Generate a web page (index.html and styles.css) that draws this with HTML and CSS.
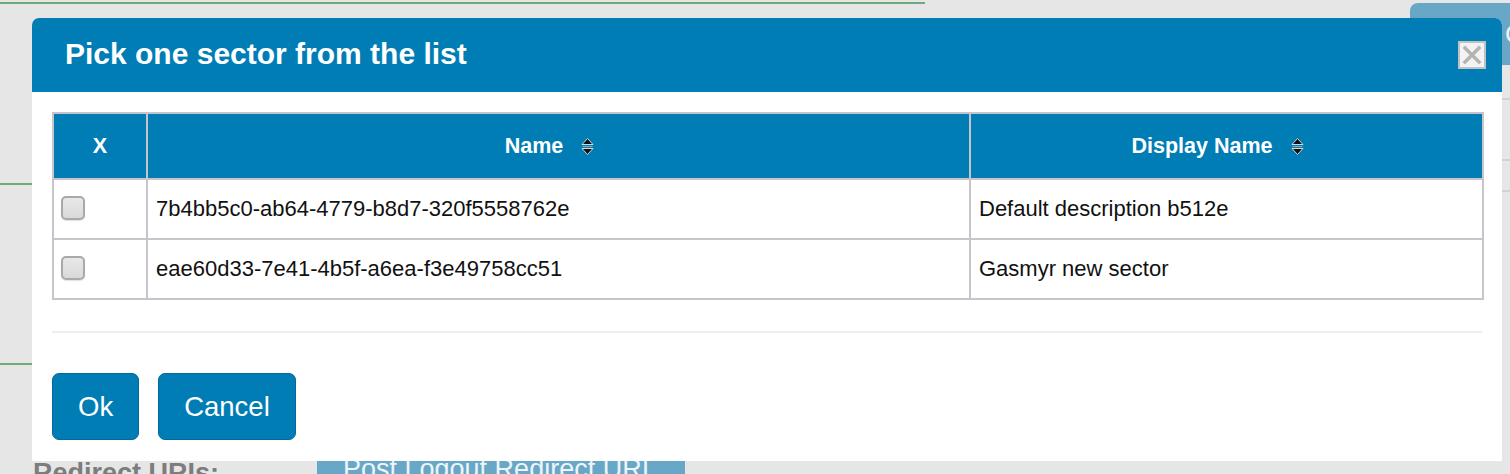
FILE: index.html
```html
<!DOCTYPE html>
<html lang="en">
<head>
<meta charset="utf-8">
<title>Pick one sector</title>
<link rel="stylesheet" href="styles.css">
</head>
<body>
<div class="page">
  <div class="page-main">
    <div class="gline gline-top"></div>
    <div class="gline gline-a"></div>
    <div class="gline gline-b"></div>
    <div class="bottom-row">
      <span class="bg-label">Redirect URIs:</span>
      <span class="bg-btn">Post Logout Redirect URI</span>
    </div>
  </div>
  <div class="page-side">
    <div class="side-btn">Cl</div>
    <div class="side-line side-line-a"></div>
    <div class="side-line side-line-b"></div>
    <div class="side-line side-line-c"></div>
  </div>
</div>

<div class="dialog">
  <div class="dialog-header">
    <h1 class="dialog-title">Pick one sector from the list</h1>
    <button class="close-btn" aria-label="Close">
      <svg width="20" height="20" viewBox="0 0 20 20"><path d="M3 3 L17 17 M17 3 L3 17" stroke="#b4b4b4" stroke-width="3.4" stroke-linecap="square" fill="none"/></svg>
    </button>
  </div>
  <div class="dialog-body">
    <table class="grid">
      <colgroup>
        <col class="c1"><col class="c2"><col class="c3">
      </colgroup>
      <thead>
        <tr>
          <th class="th-x">X</th>
          <th class="th-sort">Name<svg class="sort" width="13" height="19" viewBox="0 0 13 19"><path d="M6.5 1.5 L12 7.5 L1 7.5 Z" fill="#111" stroke="#cfd9df" stroke-width="1"/><path d="M1 11.5 L12 11.5 L6.5 17.5 Z" fill="#111" stroke="#cfd9df" stroke-width="1"/><path d="M1.5 9.5 L11.5 9.5" stroke="#9aa6ad" stroke-width="1"/></svg></th>
          <th class="th-sort">Display Name<svg class="sort" width="13" height="19" viewBox="0 0 13 19"><path d="M6.5 1.5 L12 7.5 L1 7.5 Z" fill="#111" stroke="#cfd9df" stroke-width="1"/><path d="M1 11.5 L12 11.5 L6.5 17.5 Z" fill="#111" stroke="#cfd9df" stroke-width="1"/><path d="M1.5 9.5 L11.5 9.5" stroke="#9aa6ad" stroke-width="1"/></svg></th>
        </tr>
      </thead>
      <tbody>
        <tr>
          <td class="td-check"><input type="checkbox" class="chk"></td>
          <td>7b4bb5c0-ab64-4779-b8d7-320f5558762e</td>
          <td>Default description b512e</td>
        </tr>
        <tr>
          <td class="td-check"><input type="checkbox" class="chk"></td>
          <td>eae60d33-7e41-4b5f-a6ea-f3e49758cc51</td>
          <td>Gasmyr new sector</td>
        </tr>
      </tbody>
    </table>
    <div class="sep"></div>
    <div class="actions">
      <button class="btn">Ok</button>
      <button class="btn">Cancel</button>
    </div>
  </div>
</div>
</body>
</html>
```

FILE: styles.css
```css
* { box-sizing: border-box; }
html, body {
  margin: 0;
  padding: 0;
  background: #e6e6e6;
  font-family: "Liberation Sans", Arial, sans-serif;
  overflow: hidden;
}
.page {
  display: flex;
  justify-content: space-between;
  height: 474px;
  overflow: hidden;
}
.page-main {
  width: 925px;
}
.gline {
  height: 2px;
  background: #6fab7a;
}
.gline-top { margin-top: 2px; }
.gline-a { margin-top: 179px; }
.gline-b { margin-top: 178px; }
.bottom-row {
  margin-top: 93px;
  display: flex;
  align-items: flex-start;
  white-space: nowrap;
}
.bg-label {
  margin-left: 33px;
  width: 284px;
  font-size: 27px;
  font-weight: bold;
  color: #7d7d7d;
  line-height: 30px;
}
.bg-btn {
  background: #68a8c6;
  color: #eef5f9;
  font-size: 27px;
  line-height: 22px;
  padding: 0 26px;
  width: 368px;
  height: 40px;
}
.page-side {
  width: 100px;
}
.side-btn {
  margin-top: 3px;
  height: 62px;
  background: #68a8c6;
  border-radius: 8px 0 0 0;
  color: #eef5f9;
  font-size: 26px;
  padding: 16px 0 0 95px;
  white-space: nowrap;
  overflow: hidden;
}
.side-line {
  height: 2px;
  background: #d2d2d2;
}
.side-line-a { margin-top: 33px; }
.side-line-b { margin-top: 59px; }
.side-line-c { margin-top: 29px; }

.dialog {
  position: fixed;
  left: 32px;
  top: 18px;
  width: 1470px;
  height: 443px;
  background: #fff;
  border-radius: 7px 7px 0 0;
}
.dialog-header {
  height: 74px;
  background: #007db5;
  border-radius: 7px 7px 0 0;
  display: flex;
  align-items: center;
  justify-content: space-between;
  padding: 0 16px 0 33px;
}
.dialog-title {
  margin: 0;
  color: #fff;
  font-size: 30px;
  font-weight: bold;
  line-height: 34px;
  padding-bottom: 2px;
}
.close-btn {
  width: 28px;
  height: 28px;
  padding: 0;
  margin: 0;
  border: 2px solid #c2c2c2;
  background: #f3f3f3;
  display: flex;
  align-items: center;
  justify-content: center;
}
.close-btn svg { filter: blur(0.6px); }
.dialog-body {
  padding: 20px 20px 0 20px;
}
.grid {
  width: 1430px;
  border-collapse: collapse;
  table-layout: fixed;
  border: 2px solid #c8c4cc;
}
.c1 { width: 94px; }
.c2 { width: 823px; }
.c3 { width: 513px; }
.grid th {
  background: #007db5;
  color: #fff;
  font-size: 21.5px;
  font-weight: bold;
  height: 66px;
  border: 2px solid #c8c4cc;
  text-align: center;
  vertical-align: middle;
  padding: 0;
}
.grid th.th-sort {
  padding-right: 18px;
}
.sort {
  margin-left: 18px;
  vertical-align: -3px;
}
.grid td {
  height: 60px;
  border: 2px solid #c8c4cc;
  font-size: 22px;
  color: #111;
  padding: 0 0 0 8px;
  vertical-align: middle;
}
.grid td.td-check {
  padding-left: 7px;
}
.chk {
  appearance: none;
  -webkit-appearance: none;
  display: block;
  width: 24px;
  height: 24px;
  margin: 0 0 2px 0;
  border: 2px solid #a9a9a9;
  border-radius: 5px;
  background: linear-gradient(#e8e8e8, #d9d9d9);
  box-shadow: 0 1px 1px rgba(0,0,0,0.12);
}
.sep {
  margin-top: 31px;
  height: 2px;
  background: #eeeeee;
}
.actions {
  margin-top: 40px;
  display: flex;
  gap: 19px;
}
.btn {
  height: 67px;
  padding: 0 25px;
  background: #007db5;
  border: 1px solid #006a9c;
  border-radius: 7px;
  color: #fff;
  font-family: "Liberation Sans", Arial, sans-serif;
  font-size: 27.5px;
  line-height: 30px;
}
```
